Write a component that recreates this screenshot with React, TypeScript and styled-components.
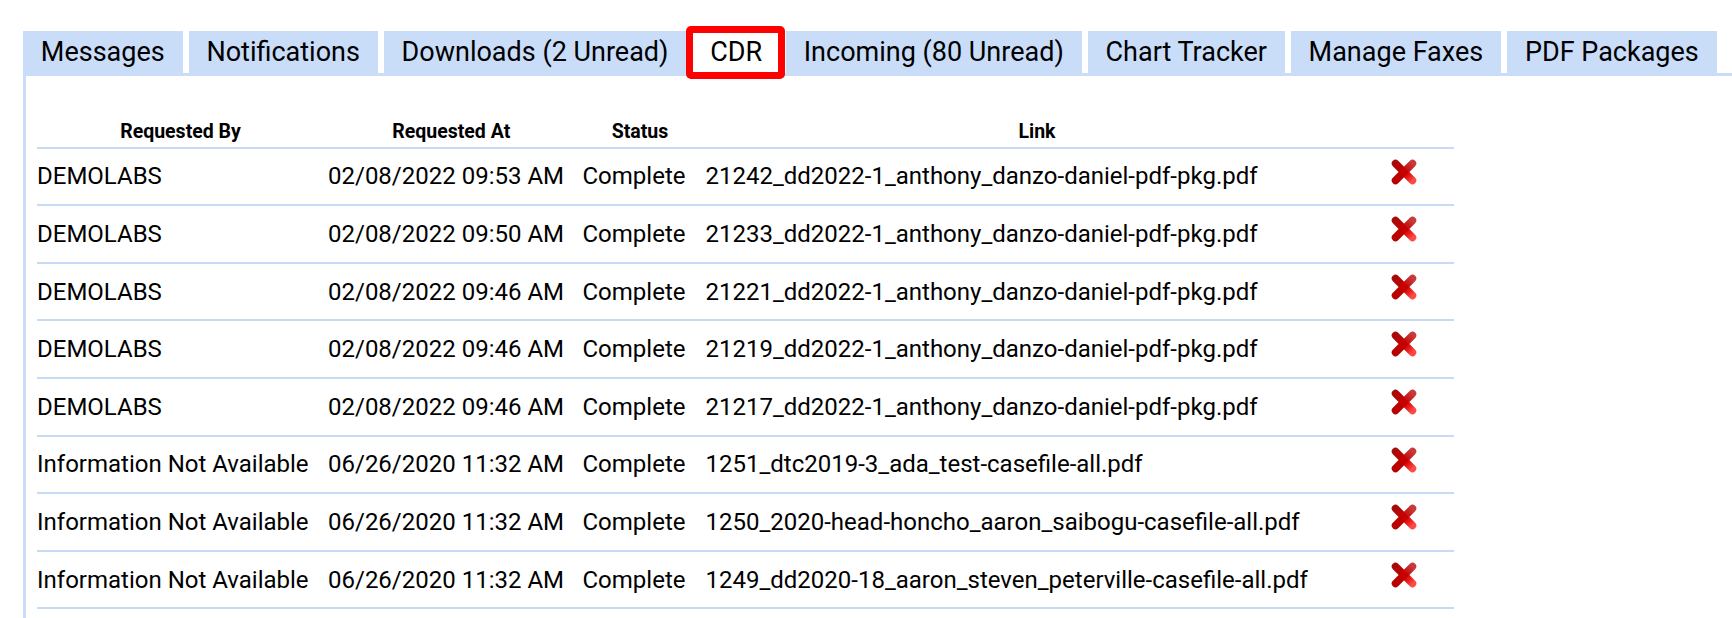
import React from "react";
import styled, { createGlobalStyle } from "styled-components";

const GlobalStyle = createGlobalStyle`
  html, body {
    margin: 0;
    padding: 0;
    background: #ffffff;
    overflow: hidden;
  }
  body {
    font-family: Roboto, "Liberation Sans", Arial, sans-serif;
    color: #000000;
  }
  * { box-sizing: border-box; }
`;

const BLUE = "#c9ddf9";
const LINE = "#c8dbf6";

const Page = styled.div`
  padding: 31px 0 0 23px;
  width: 1732px;
  height: 618px;
  overflow: hidden;
`;

const TabBar = styled.div`
  display: flex;
  gap: 6px;
  height: 42px;
`;

const Tab = styled.div<{ $active?: boolean }>`
  position: relative;
  padding: 5px 17.85px;
  font-size: 27px;
  line-height: 32px;
  white-space: nowrap;
  background: ${(p) => (p.$active ? "#ffffff" : BLUE)};
  color: #000;
`;

const Highlight = styled.span`
  position: absolute;
  left: -6px;
  top: -5px;
  width: 99px;
  height: 53px;
  border: 7.5px solid #ff0000;
  border-radius: 5px;
  pointer-events: none;
`;

const Panel = styled.div`
  border-top: 3px solid ${BLUE};
  border-left: 3px solid ${BLUE};
  padding: 39px 0 0 11px;
  min-height: 545px;
`;

const Table = styled.div`
  display: flex;
  flex-direction: column;
  width: 1417px;
`;

const COLS = "287px 254.5px 123px 671px 81.5px";

const HeadRow = styled.div`
  display: grid;
  grid-template-columns: ${COLS};
  height: 33.7px;
  border-bottom: 2px solid ${LINE};
`;

const HeadCell = styled.div`
  display: flex;
  align-items: flex-end;
  justify-content: center;
  padding-bottom: 3.8px;
  font-size: 19.5px;
  font-weight: 700;
  line-height: normal;
  white-space: nowrap;
`;

const Row = styled.div`
  display: grid;
  grid-template-columns: ${COLS};
  height: 57.6px;
  border-bottom: 2px solid ${LINE};
  align-items: center;
`;

const Cell = styled.div<{ $first?: boolean }>`
  padding-left: ${(p) => (p.$first ? "0" : "4px")};
  font-size: 24px;
  line-height: normal;
  white-space: nowrap;
`;

const IconCell = styled.div`
  display: flex;
  align-items: flex-start;
  align-self: stretch;
  padding: 9px 0 0 17px;
`;

const DeleteButton = styled.button`
  border: 0;
  padding: 0;
  margin: 0;
  background: none;
  width: 28px;
  height: 28px;
  cursor: pointer;
  display: block;
`;

const DeleteIcon: React.FC = () => (
  <svg width="28" height="28" viewBox="0 0 28 28" aria-hidden="true">
    <defs>
      <linearGradient id="xg" x1="0" y1="0" x2="1" y2="1">
        <stop offset="0" stopColor="#a80a0a" />
        <stop offset="0.45" stopColor="#c80000" />
        <stop offset="0.75" stopColor="#e31414" />
        <stop offset="1" stopColor="#ff4848" />
      </linearGradient>
      <linearGradient id="xg2" x1="1" y1="0" x2="0" y2="1">
        <stop offset="0" stopColor="#c93a3a" />
        <stop offset="0.5" stopColor="#c40000" />
        <stop offset="1" stopColor="#b80000" />
      </linearGradient>
    </defs>
    <path d="M5.5 5.5 L22.5 22.5" stroke="url(#xg)" strokeWidth="7.5" strokeLinecap="round" fill="none" />
    <path d="M22.5 5.5 L5.5 22.5" stroke="url(#xg2)" strokeWidth="7.5" strokeLinecap="round" fill="none" />
    <path d="M14 9.5 L18.5 14 L14 18.5 L9.5 14 Z" fill="#c70000" />
  </svg>
);

type Req = { by: string; at: string; status: string; link: string };

const rows: Req[] = [
  { by: "DEMOLABS", at: "02/08/2022 09:53 AM", status: "Complete", link: "21242_dd2022-1_anthony_danzo-daniel-pdf-pkg.pdf" },
  { by: "DEMOLABS", at: "02/08/2022 09:50 AM", status: "Complete", link: "21233_dd2022-1_anthony_danzo-daniel-pdf-pkg.pdf" },
  { by: "DEMOLABS", at: "02/08/2022 09:46 AM", status: "Complete", link: "21221_dd2022-1_anthony_danzo-daniel-pdf-pkg.pdf" },
  { by: "DEMOLABS", at: "02/08/2022 09:46 AM", status: "Complete", link: "21219_dd2022-1_anthony_danzo-daniel-pdf-pkg.pdf" },
  { by: "DEMOLABS", at: "02/08/2022 09:46 AM", status: "Complete", link: "21217_dd2022-1_anthony_danzo-daniel-pdf-pkg.pdf" },
  { by: "Information Not Available", at: "06/26/2020 11:32 AM", status: "Complete", link: "1251_dtc2019-3_ada_test-casefile-all.pdf" },
  { by: "Information Not Available", at: "06/26/2020 11:32 AM", status: "Complete", link: "1250_2020-head-honcho_aaron_saibogu-casefile-all.pdf" },
  { by: "Information Not Available", at: "06/26/2020 11:32 AM", status: "Complete", link: "1249_dd2020-18_aaron_steven_peterville-casefile-all.pdf" },
];

const tabs = [
  "Messages",
  "Notifications",
  "Downloads (2 Unread)",
  "CDR",
  "Incoming (80 Unread)",
  "Chart Tracker",
  "Manage Faxes",
  "PDF Packages",
];

export default function App() {
  return (
    <>
      <GlobalStyle />
      <Page>
        <TabBar>
          {tabs.map((t) => (
            <Tab key={t} $active={t === "CDR"}>
              {t}
              {t === "CDR" && <Highlight />}
            </Tab>
          ))}
        </TabBar>
        <Panel>
          <Table>
            <HeadRow>
              <HeadCell>Requested By</HeadCell>
              <HeadCell>Requested At</HeadCell>
              <HeadCell>Status</HeadCell>
              <HeadCell>Link</HeadCell>
              <HeadCell />
            </HeadRow>
            {rows.map((r, i) => (
              <Row key={i}>
                <Cell $first>{r.by}</Cell>
                <Cell>{r.at}</Cell>
                <Cell>{r.status}</Cell>
                <Cell>{r.link}</Cell>
                <IconCell>
                  <DeleteButton aria-label="Delete">
                    <DeleteIcon />
                  </DeleteButton>
                </IconCell>
              </Row>
            ))}
          </Table>
        </Panel>
      </Page>
    </>
  );
}
